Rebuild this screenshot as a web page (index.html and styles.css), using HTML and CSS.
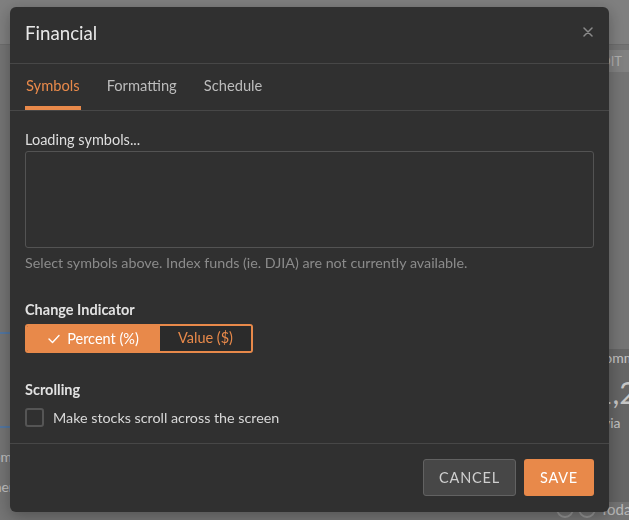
FILE: index.html
```html
<!DOCTYPE html>
<html lang="en">
<head>
    <meta charset="UTF-8">
    <meta name="viewport" content="width=device-width, initial-scale=1.0">
    <title>Financial</title>
    <link rel="stylesheet" href="styles.css">
</head>
<body>
    <div class="page">
        <div class="topbar"></div>
        <div class="toolbar">
            <button class="ghost-btn">EDIT</button>
        </div>
        <div class="content">
            <div class="left-col">
                <div class="blue-line"></div>
                <div class="blue-line second"></div>
                <div class="left-text">Home</div>
                <div class="left-text">Inner</div>
            </div>
            <div class="right-col">
                <div class="stat-card">
                    <div class="stat-label">Community</div>
                    <div class="stat-value">1,27</div>
                    <div class="stat-sub">via</div>
                </div>
                <div class="today">
                    <span class="ring"></span><span class="ring"></span>
                    <span>Today</span>
                </div>
            </div>
        </div>
    </div>

    <div class="overlay">
        <div class="modal">
            <div class="modal-header">
                <h2>Financial</h2>
                <button class="close-btn" aria-label="Close">
                    <svg width="10" height="10" viewBox="0 0 10 10">
                        <path d="M1 1 L9 9 M9 1 L1 9" stroke="#8a8a8a" stroke-width="1.5" stroke-linecap="round"/>
                    </svg>
                </button>
            </div>

            <div class="tabs">
                <div class="tab active">Symbols</div>
                <div class="tab">Formatting</div>
                <div class="tab">Schedule</div>
            </div>

            <div class="modal-body">
                <div class="field-label">Loading symbols...</div>
                <div class="symbol-box"></div>
                <div class="help-text">Select symbols above. Index funds (ie. DJIA) are not currently available.</div>

                <div class="section-title first">Change Indicator</div>
                <div class="toggle-group">
                    <button class="toggle selected">
                        <svg width="12" height="10" viewBox="0 0 12 10">
                            <path d="M1 5 L4.5 8.5 L11 1.5" fill="none" stroke="#fff" stroke-width="1.4" stroke-linecap="round" stroke-linejoin="round"/>
                        </svg>
                        Percent (%)
                    </button>
                    <button class="toggle">Value ($)</button>
                </div>

                <div class="section-title">Scrolling</div>
                <label class="check-row">
                    <span class="checkbox"></span>
                    Make stocks scroll across the screen
                </label>
            </div>

            <div class="modal-footer">
                <button class="btn btn-cancel">CANCEL</button>
                <button class="btn btn-save">SAVE</button>
            </div>
        </div>
    </div>
</body>
</html>
```

FILE: styles.css
```css
body {
    margin: 0;
    padding: 0;
    height: 100vh;
    overflow: hidden;
    background: #7e7e7e;
    font-family: 'Lato', 'Noto Sans', sans-serif;
    color: #e6e6e6;
}
/* page behind the dialog */
.page {
    height: 100%;
}
.topbar {
    height: 44px;
    background: #8a8a8a;
    border-bottom: 1px solid #767676;
}
.toolbar {
    height: 31px;
    display: flex;
    justify-content: flex-end;
    align-items: center;
    padding: 8px 0;
    box-sizing: border-box;
}
.ghost-btn {
    background: #8c8c8c;
    border: none;
    color: #bdbdbd;
    font-family: inherit;
    font-size: 13px;
    height: 22px;
    padding: 0 7px 0 12px;
}
.content {
    display: grid;
    grid-template-columns: 300px 1fr;
}
.left-col {
    padding-top: 256px;
}
.blue-line {
    height: 2px;
    background: #5a80ad;
    width: 40px;
}
.blue-line.second {
    margin-top: 92px;
}
.left-text {
    font-size: 14px;
    color: #d0d0d0;
    margin-left: -18px;
    margin-top: 20px;
    line-height: 18px;
}
.left-text + .left-text {
    margin-top: 12px;
}
.right-col {
    display: flex;
    flex-direction: column;
    align-items: flex-end;
}
.stat-card {
    margin-top: 273px;
    width: 100px;
    height: 153px;
    background: #6d6d6d;
    padding: 0 0 0 4px;
    box-sizing: border-box;
    margin-right: -62px;
    color: #d6d6d6;
}
.stat-label {
    font-size: 14px;
}
.stat-value {
    font-size: 30px;
    line-height: 40px;
    margin-top: 6px;
}
.stat-sub {
    font-size: 14px;
    margin-top: 2px;
    padding-left: 8px;
}
.today {
    margin-top: -2px;
    margin-right: -10px;
    display: flex;
    align-items: center;
    gap: 4px;
    font-size: 15px;
    color: #c8c8c8;
}
.ring {
    width: 14px;
    height: 14px;
    border: 2px solid #a0a0a0;
    border-radius: 50%;
}
/* dialog */
.overlay {
    position: fixed;
    top: 0;
    left: 0;
    right: 0;
    bottom: 0;
    background: rgba(0, 0, 0, 0.08);
}
.modal {
    margin: 7px 0 0 10px;
    width: 599px;
    background: #303030;
    border-radius: 6px;
    box-shadow: 0 4px 16px rgba(0, 0, 0, 0.3);
}
.modal-header {
    height: 56px;
    display: flex;
    justify-content: space-between;
    align-items: center;
    padding: 0 15px;
    border-bottom: 1px solid #474747;
}
.modal-header h2 {
    margin: -4px 0 0;
    font-size: 18.7px;
    font-weight: normal;
    color: #e8e8e8;
}
.close-btn {
    background: none;
    border: none;
    padding: 0;
    margin-right: 1px;
    margin-top: -6px;
    cursor: pointer;
}
.tabs {
    display: flex;
    gap: 25px;
    padding: 0 15px;
    height: 46px;
    border-bottom: 1px solid #474747;
}
.tab {
    font-size: 14.7px;
    color: #bcbcbc;
    padding: 12px 1px 0;
    box-sizing: border-box;
    height: 46px;
    border-bottom: 4px solid transparent;
}
.tab.active {
    color: #e8894a;
    border-bottom-color: #e8894a;
}
.modal-body {
    padding: 20px 15px 16px;
}
.field-label {
    font-size: 14.5px;
    line-height: 18px;
    color: #dedede;
}
.symbol-box {
    margin-top: 2px;
    height: 95px;
    border: 1px solid #535353;
    border-radius: 3px;
}
.help-text {
    margin-top: 6px;
    font-size: 14.3px;
    line-height: 18px;
    color: #8b8b8b;
}
.section-title {
    margin-top: 28px;
    font-size: 14.5px;
    font-weight: bold;
    line-height: 18px;
    color: #e2e2e2;
}
.section-title.first {
    margin-top: 29px;
}
.toggle-group {
    margin-top: 5px;
    display: inline-flex;
    height: 29px;
    border: 2px solid #e8894a;
    border-radius: 3px;
    box-sizing: border-box;
    overflow: hidden;
}
.toggle {
    border: none;
    background: #2b2b2b;
    color: #e8894a;
    font-family: inherit;
    font-size: 14.5px;
    padding: 0 0 2px;
    width: 91px;
    display: flex;
    align-items: center;
    justify-content: center;
    gap: 7px;
}
.toggle.selected {
    background: #e8894a;
    color: #fff;
    width: 133px;
    padding: 0;
}
.check-row {
    margin-top: 9px;
    display: flex;
    align-items: center;
    gap: 9px;
    font-size: 14.3px;
    line-height: 18px;
    color: #d8d8d8;
}
.checkbox {
    width: 19px;
    height: 19px;
    border: 2px solid #555;
    border-radius: 3px;
    box-sizing: border-box;
}
.modal-footer {
    border-top: 1px solid #474747;
    display: flex;
    justify-content: flex-end;
    gap: 8px;
    padding: 15px 15px 16px;
}
.btn {
    height: 37px;
    border-radius: 3px;
    font-family: inherit;
    font-size: 14.5px;
    letter-spacing: 0.8px;
    cursor: pointer;
}
.btn-cancel {
    width: 93px;
    background: #474747;
    border: 1px solid #626262;
    color: #cfcfcf;
}
.btn-save {
    width: 70px;
    background: #e8894a;
    border: none;
    color: #fff;
}
```
